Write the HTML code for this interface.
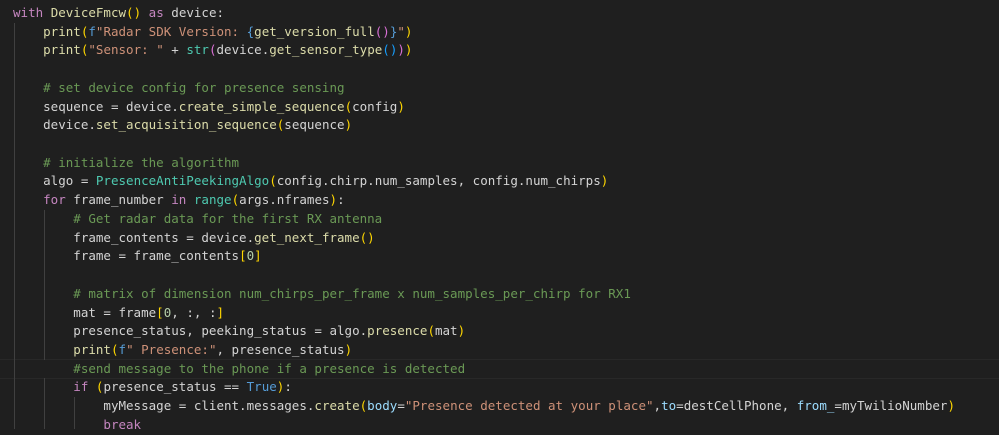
<!DOCTYPE html>
<html><head><style>
body{margin:0;background:#1f1f1f;width:999px;height:429px;overflow:hidden;}
pre{margin:0;padding:4px 0 0 13px;font-family:"DejaVu Sans Mono","Liberation Mono",monospace;font-size:12.52px;line-height:18.72px;color:#d4d4d4;position:relative;}
.k{color:#c586c0}.f{color:#dcdcaa}.s{color:#ce9178}.c{color:#6a9955}.b{color:#569cd6}.p{color:#9cdcfe}.y{color:#ffd700}.m{color:#da70d6}.l{color:#179fff}.t{color:#4ec9b0}
.g{position:absolute;width:1px;background:#404040}
.hl{position:absolute;left:0;width:999px;top:359px;height:18px;border-top:1px solid #282828;border-bottom:1px solid #282828}
</style></head><body>
<div class="hl"></div>
<div class="g" style="left:14px;top:23px;height:406px"></div>
<div class="g" style="left:44px;top:210px;height:150px"></div>
<div class="g" style="left:44px;top:378px;height:51px"></div>
<div class="g" style="left:74px;top:397px;height:32px"></div>
<pre><span class="k">with</span> <span class="f">DeviceFmcw</span><span class="y">()</span> <span class="k">as</span> device:
    <span class="f">print</span><span class="y">(</span><span class="b">f</span><span class="s">"Radar SDK Version: </span><span class="b">{</span><span class="f">get_version_full</span><span class="m">()</span><span class="b">}</span><span class="s">"</span><span class="y">)</span>
    <span class="f">print</span><span class="y">(</span><span class="s">"Sensor: "</span> + <span class="t">str</span><span class="m">(</span>device.<span class="f">get_sensor_type</span><span class="l">()</span><span class="m">)</span><span class="y">)</span>

    <span class="c"># set device config for presence sensing</span>
    sequence = device.<span class="f">create_simple_sequence</span><span class="y">(</span>config<span class="y">)</span>
    device.<span class="f">set_acquisition_sequence</span><span class="y">(</span>sequence<span class="y">)</span>

    <span class="c"># initialize the algorithm</span>
    algo = <span class="t">PresenceAntiPeekingAlgo</span><span class="y">(</span>config.chirp.num_samples, config.num_chirps<span class="y">)</span>
    <span class="k">for</span> frame_number <span class="k">in</span> <span class="t">range</span><span class="y">(</span>args.nframes<span class="y">)</span>:
        <span class="c"># Get radar data for the first RX antenna</span>
        frame_contents = device.<span class="f">get_next_frame</span><span class="y">()</span>
        frame = frame_contents<span class="y">[</span><span style="color:#b5cea8">0</span><span class="y">]</span>

        <span class="c"># matrix of dimension num_chirps_per_frame x num_samples_per_chirp for RX1</span>
        mat = frame<span class="y">[</span><span style="color:#b5cea8">0</span>, :, :<span class="y">]</span>
        presence_status, peeking_status = algo.<span class="f">presence</span><span class="y">(</span>mat<span class="y">)</span>
        <span class="f">print</span><span class="y">(</span><span class="b">f</span><span class="s">" Presence:"</span>, presence_status<span class="y">)</span>
        <span class="c">#send message to the phone if a presence is detected</span>
        <span class="k">if</span> <span class="y">(</span>presence_status == <span class="b">True</span><span class="y">)</span>:
            myMessage = client.messages.<span class="f">create</span><span class="y">(</span><span class="p">body</span>=<span class="s">"Presence detected at your place"</span>,<span class="p">to</span>=destCellPhone, <span class="p">from_</span>=myTwilioNumber<span class="y">)</span>
            <span class="k">break</span>
</pre>
</body></html>
